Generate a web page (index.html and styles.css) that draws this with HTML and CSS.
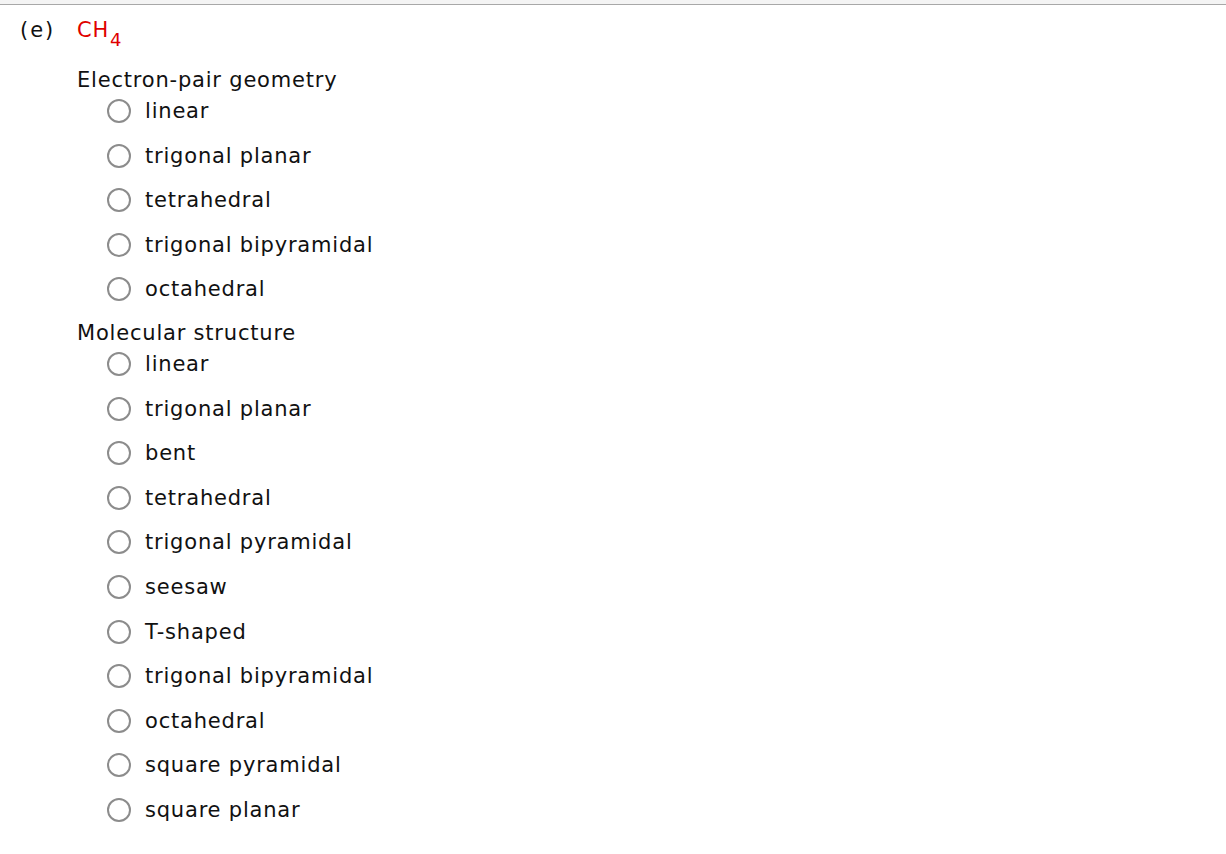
FILE: index.html
```html
<!DOCTYPE html>
<html>
<head>
<meta charset="utf-8">
<link rel="stylesheet" href="styles.css">
</head>
<body>
<div class="topbar"></div>
<div class="question">
  <div class="title">
    <span class="part">(e)</span>
    <span class="formula">CH<sub>4</sub></span>
  </div>
  <div class="group">
    <div class="group-label">Electron-pair geometry</div>
    <ul class="options">
      <li class="option"><span class="radio"></span><span>linear</span></li>
      <li class="option"><span class="radio"></span><span>trigonal planar</span></li>
      <li class="option"><span class="radio"></span><span>tetrahedral</span></li>
      <li class="option"><span class="radio"></span><span>trigonal bipyramidal</span></li>
      <li class="option"><span class="radio"></span><span>octahedral</span></li>
    </ul>
  </div>
  <div class="group">
    <div class="group-label">Molecular structure</div>
    <ul class="options">
      <li class="option"><span class="radio"></span><span>linear</span></li>
      <li class="option"><span class="radio"></span><span>trigonal planar</span></li>
      <li class="option"><span class="radio"></span><span>bent</span></li>
      <li class="option"><span class="radio"></span><span>tetrahedral</span></li>
      <li class="option"><span class="radio"></span><span>trigonal pyramidal</span></li>
      <li class="option"><span class="radio"></span><span>seesaw</span></li>
      <li class="option"><span class="radio"></span><span>T-shaped</span></li>
      <li class="option"><span class="radio"></span><span>trigonal bipyramidal</span></li>
      <li class="option"><span class="radio"></span><span>octahedral</span></li>
      <li class="option"><span class="radio"></span><span>square pyramidal</span></li>
      <li class="option"><span class="radio"></span><span>square planar</span></li>
    </ul>
  </div>
</div>
</body>
</html>
```

FILE: styles.css
```css
html, body {
  margin: 0;
  padding: 0;
  background: #ffffff;
}
body {
  font-family: "DejaVu Sans", Verdana, sans-serif;
  font-size: 21px;
  letter-spacing: 0.8px;
  color: #111111;
}
.topbar {
  height: 4px;
  background: #f4f4f4;
  border-bottom: 1px solid #a8a8a8;
}
.question {
  padding: 13px 0 0 20px;
}
.title {
  display: flex;
  align-items: baseline;
  line-height: 24px;
  height: 24px;
}
.part {
  width: 57px;
  letter-spacing: 2px;
}
.formula {
  color: #e00000;
}
.formula sub {
  font-size: 18px;
  vertical-align: -9px;
  line-height: 0;
  margin-left: 1px;
}
.group {
  margin-top: 26px;
  padding-left: 57px;
}
.group + .group {
  margin-top: 0;
}
.group-label {
  line-height: 24px;
}
.options {
  list-style: none;
  margin: 6px 0 0 0;
  padding: 0 0 0 30px;
}
.option {
  display: flex;
  align-items: center;
  height: 26px;
  margin-bottom: 18.6px;
  gap: 14px;
}
.radio {
  width: 24px;
  height: 24px;
  box-sizing: border-box;
  border: 2px solid #8c8c8c;
  border-radius: 50%;
  flex: none;
}
```
